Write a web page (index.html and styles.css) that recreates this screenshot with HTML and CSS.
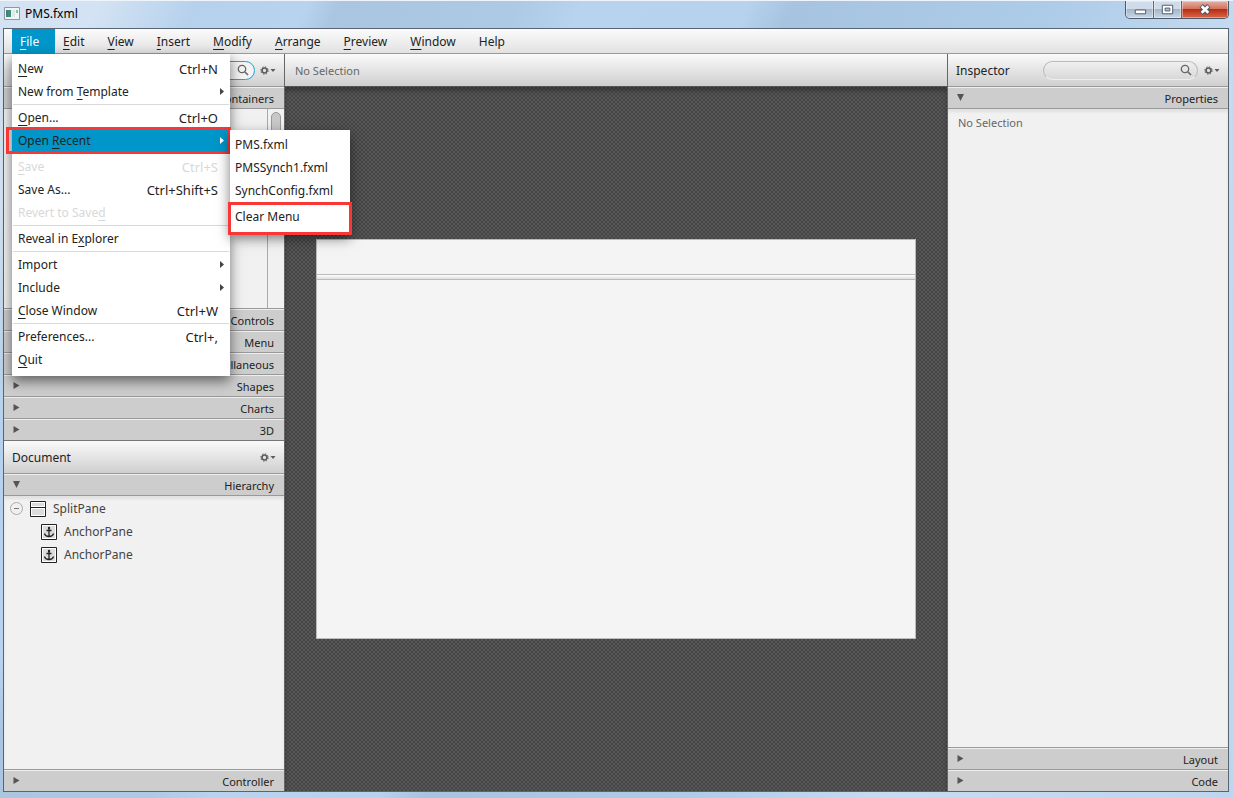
FILE: index.html
```html
<!DOCTYPE html>
<html lang="en">
<head>
<meta charset="utf-8">
<title>PMS.fxml</title>
<link rel="stylesheet" href="styles.css">
</head>
<body>
<svg class="defs" aria-hidden="true">
  <symbol id="search" viewBox="0 0 12 12"><circle cx="5" cy="5" r="3.7" fill="none" stroke="#666" stroke-width="1.3"/><path d="M7.7 7.7 11 11" stroke="#666" stroke-width="1.6"/></symbol>
  <symbol id="gear" viewBox="0 0 16 9"><circle cx="4.5" cy="4.5" r="2.5" fill="none" stroke="#5a5a5a" stroke-width="1.7"/><circle cx="4.5" cy="4.5" r="3.7" fill="none" stroke="#5a5a5a" stroke-width="1" stroke-dasharray="1.45 1.45"/><path d="M10.500 3h5L13 6z" fill="#5a5a5a"/></symbol>
  <symbol id="right" viewBox="0 0 6 7"><path d="M0 0v7l6-3.500z" fill="currentColor"/></symbol>
  <symbol id="down" viewBox="0 0 6 6"><path d="M0 0h6L3 6z" fill="currentColor"/></symbol>
  <symbol id="sub" viewBox="0 0 4 7"><path d="M0 0v7l4-3.500z" fill="currentColor"/></symbol>
  <symbol id="anchor" viewBox="0 0 16 16"><path d="M.5.5h15v15H.5z" fill="#fff" stroke="#222"/><path d="M2 2h12v12H2z" fill="#dcdcdc"/><path d="M8 4v8.500M5.500 6.500h5M3.500 9.500c.5 2 2 3 4.500 3s4-1 4.500-3" fill="none" stroke="#222" stroke-width="1.3"/><circle cx="8" cy="4" r="1.200" fill="#222"/></symbol>
</svg>
<div class="window">
  <header class="titlebar">
    <svg class="appicon" viewBox="0 0 16 13"><path d="M.5.5h15v12H.5z" fill="#f4f4f4" stroke="#8d98a3"/><path d="M2 3h5v7H2z" fill="#3f8f78"/><path d="M2 3h2v7H2z" fill="#4c7990"/><path d="M8 3h3v7H8z" fill="#e0e8e8"/><path d="M12 3h2v3h-2z" fill="#7fc4a4"/></svg>
    <h1 class="title">PMS.fxml</h1>
    <div class="controls">
      <button class="ctl" aria-label="Minimize"><svg viewBox="0 0 28 18"><path d="M9.500 9.500h11v4h-11z" fill="#fff" stroke="#4c5566"/></svg></button>
      <button class="ctl" aria-label="Maximize"><svg viewBox="0 0 28 18"><path d="M8.500 4.500h11v9h-11z" fill="#fff" stroke="#4c5566"/><path d="M11.500 7.500h5v3h-5z" fill="#b9cadb" stroke="#4c5566"/></svg></button>
      <button class="ctl close" aria-label="Close"><svg viewBox="0 0 46 18"><path d="m19 5 8 8M27 5l-8 8" stroke="#4c5566" stroke-width="5"/><path d="m19.500 5.500 7 7M26.500 5.500l-7 7" stroke="#fff" stroke-width="2.800"/></svg></button>
    </div>
  </header>
  <div class="client">
    <nav class="menubar">
      <div class="filewrap">
        <button class="mb active"><u>F</u>ile</button>
        <div class="menu filemenu">
          <button class="mi"><span><u>N</u>ew</span><kbd>Ctrl+N</kbd></button>
          <button class="mi"><span>New from <u>T</u>emplate</span><svg class="sub"><use href="#sub"/></svg></button>
          <hr>
          <button class="mi"><span><u>O</u>pen...</span><kbd>Ctrl+O</kbd></button>
          <div class="subwrap">
            <button class="mi selected"><span>Open <u>R</u>ecent</span><svg class="sub"><use href="#sub"/></svg></button>
            <div class="mark markrecent"></div>
            <div class="menu recent">
              <button class="mi">PMS.fxml</button>
              <button class="mi">PMSSynch1.fxml</button>
              <button class="mi">SynchConfig.fxml</button>
              <hr>
              <button class="mi">Clear Menu</button>
              <div class="mark markclear"></div>
            </div>
          </div>
          <hr>
          <button class="mi" disabled><span><u>S</u>ave</span><kbd>Ctrl+S</kbd></button>
          <button class="mi"><span>Save As...</span><kbd>Ctrl+Shift+S</kbd></button>
          <button class="mi" disabled><span>Revert to Save<u>d</u></span></button>
          <hr>
          <button class="mi"><span>Reveal in E<u>x</u>plorer</span></button>
          <hr>
          <button class="mi"><span>Import</span><svg class="sub"><use href="#sub"/></svg></button>
          <button class="mi"><span>Include</span><svg class="sub"><use href="#sub"/></svg></button>
          <button class="mi"><span><u>C</u>lose Window</span><kbd>Ctrl+W</kbd></button>
          <hr>
          <button class="mi"><span>Preferences...</span><kbd>Ctrl+,</kbd></button>
          <button class="mi"><span><u>Q</u>uit</span></button>
        </div>
      </div>
      <button class="mb"><u>E</u>dit</button>
      <button class="mb"><u>V</u>iew</button>
      <button class="mb"><u>I</u>nsert</button>
      <button class="mb"><u>M</u>odify</button>
      <button class="mb"><u>A</u>rrange</button>
      <button class="mb"><u>P</u>review</button>
      <button class="mb"><u>W</u>indow</button>
      <button class="mb">Help</button>
    </nav>
    <main class="work">
      <aside class="side left">
        <section class="library">
          <div class="bar"><label class="search focus"><input type="text" aria-label="Search library"><svg><use href="#search"/></svg></label><button class="gear" aria-label="Library options"><svg><use href="#gear"/></svg></button></div>
          <button class="sec"><svg><use href="#down"/></svg>Containers</button>
          <div class="list"><div class="track"><div class="thumb"></div></div></div>
          <button class="sec"><svg><use href="#right"/></svg>Controls</button>
          <button class="sec"><svg><use href="#right"/></svg>Menu</button>
          <button class="sec"><svg><use href="#right"/></svg>Miscellaneous</button>
          <button class="sec"><svg><use href="#right"/></svg>Shapes</button>
          <button class="sec"><svg><use href="#right"/></svg>Charts</button>
          <button class="sec"><svg><use href="#right"/></svg>3D</button>
        </section>
        <section class="document">
          <div class="bar"><h2>Document</h2><button class="gear" aria-label="Document options"><svg><use href="#gear"/></svg></button></div>
          <button class="sec"><svg><use href="#down"/></svg>Hierarchy</button>
          <div class="tree">
            <div class="node"><svg class="toggle" viewBox="0 0 13 13"><circle cx="6.500" cy="6.500" r="6" fill="#f0f0f0" stroke="#aaa"/><path d="M4 6.500h5" stroke="#777"/></svg><svg class="nicon" viewBox="0 0 16 16"><path d="M.5.5h15v15H.5z" fill="#fff" stroke="#222"/><path d="M2 2h12v3H2zM2 8h12v6H2z" fill="#dcdcdc"/><path d="M0 6.500h16" stroke="#222"/></svg>SplitPane</div>
            <div class="node child"><svg class="nicon"><use href="#anchor"/></svg>AnchorPane</div>
            <div class="node child"><svg class="nicon"><use href="#anchor"/></svg>AnchorPane</div>
          </div>
          <button class="sec"><svg><use href="#right"/></svg>Controller</button>
        </section>
      </aside>
      <section class="center">
        <div class="bar status">No Selection</div>
        <div class="canvas"><div class="stage"><div class="pane top"></div><div class="divider"></div><div class="pane"></div></div></div>
      </section>
      <aside class="side right">
        <div class="bar"><h2>Inspector</h2><label class="search"><input type="text" aria-label="Search properties"><svg><use href="#search"/></svg></label><button class="gear" aria-label="Inspector options"><svg><use href="#gear"/></svg></button></div>
        <button class="sec"><svg><use href="#down"/></svg>Properties</button>
        <div class="props">No Selection</div>
        <button class="sec"><svg><use href="#right"/></svg>Layout</button>
        <button class="sec"><svg><use href="#right"/></svg>Code</button>
      </aside>
    </main>
  </div>
</div>
</body>
</html>
```
FILE: styles.css
```css
* { box-sizing: border-box; }
body { margin: 0; font: 12px/16px "Noto Sans", sans-serif; color: #222; }
button { font: inherit; color: inherit; border: 0; padding: 0; background: none; text-align: left; }
h1, h2 { margin: 0; font-size: 12px; font-weight: 400; }
.defs { position: absolute; width: 0; height: 0; }

.window {
  display: flex; flex-direction: column; height: 100vh; padding: 0 4px 6px 3px;
  border-top: 1px solid #eef4fa;
  background: linear-gradient(115deg, #d3e3f3 0, #d3e3f3 90px, #b6d1ec 180px, #b8d3ee 280px, #a9c5e0 310px, #adcae5 470px, #b7d3ee 530px, #b6d2ed 680px, #a6c4e0 720px, #adcce8 960px, #c6dbf0 1140px, #bdd6ef);
}
.titlebar { display: flex; align-items: flex-start; height: 27px; flex: none; }
.appicon { width: 16px; height: 13px; margin: 6px 5px 0 1px; }
.title { flex: 1; margin-top: 4px; color: #000; font-size: 12px; line-height: 17px; }
.controls {
  display: flex; height: 18px; overflow: hidden; border: 1px solid #4b596a; border-top: 0;
  border-radius: 0 0 5px 5px; background: linear-gradient(#cfdbe8 0 45%, #a5b6c9 50%, #c8d8e9);
}
.ctl { width: 28px; height: 17px; border-right: 1px solid #5b6878; box-shadow: inset 0 0 0 1px #ffffff66; }
.ctl svg { display: block; width: 100%; height: 17px; }
.close { width: 46px; border: 0; background: linear-gradient(#e0a496 0 10%, #d3745e 45%, #b62d15 50%, #d45c3c 90%); }

.client { display: flex; flex-direction: column; flex: 1; min-height: 0; border: 1px solid #596473; background: #f1f1f1; }
.menubar { display: flex; height: 25px; flex: none; padding-left: 8px; border-bottom: 1px solid #999; background: linear-gradient(#fbfbfb, #e2e2e2); }
.mb { height: 25px; padding: 0 15px 0 8px; white-space: nowrap; }
.mb u, .mi u { text-decoration: underline; text-underline-offset: 3px; text-decoration-thickness: 1px; text-decoration-skip-ink: none; }
.filewrap { position: relative; }
.active { width: 43px; background: #0096c9; color: #fff; }

.menu { position: absolute; z-index: 5; background: #fff; box-shadow: 0 5px 12px #0008; }
.filemenu { top: 25px; left: 0; width: 218px; padding: 3px 0 5px; }
.mi { display: flex; align-items: center; justify-content: space-between; width: 100%; height: 23px; padding: 0 12px 0 6px; white-space: nowrap; }
.mi kbd { font: inherit; font-size: 13px; }
.mi:disabled { color: #d8d8d8; }
.menu hr { height: 1px; margin: 1px; border: 0; background: #d9d9d9; }
.sub { width: 4px; height: 7px; margin-right: -6px; color: #444; }
.selected { background: #0096c9; }
.selected .sub { color: #fff; }
.subwrap { position: relative; }
.recent { top: 1px; left: 218px; width: 120px; padding: 3px 0 5px; }
.recent .mi { padding-left: 5px; }
.mark { position: absolute; border: 3px solid #fa3737; pointer-events: none; }
.markrecent { inset: -2px -1px -2px -6px; }
.markclear { z-index: 6; left: -2px; right: -2px; bottom: -2px; height: 33px; }

.work { display: flex; flex: 1; min-height: 0; }
.side { display: flex; flex-direction: column; width: 280px; flex: none; }
.bar { display: flex; align-items: center; height: 33px; flex: none; padding: 0 8px; border-bottom: 1px solid #999; background: linear-gradient(#fafafa, #cfcfcf); }
.bar h2 { flex: 1; padding-top: 2px; }
.search { display: flex; align-items: center; width: 155px; height: 19px; margin-right: 6px; padding-right: 5px; border: 1px solid #bbb; border-bottom-color: #eee; border-radius: 10px; }
.search input { flex: 1; min-width: 0; border: 0; background: none; outline: 0; }
.search svg { width: 12px; height: 12px; }
.search.focus { flex: 1; margin-right: 5px; border: 1px solid #18a6d8; background: #f4f4f4; }
.gear svg { display: block; width: 16px; height: 9px; }
.sec { display: flex; align-items: center; justify-content: space-between; height: 22px; flex: none; padding: 2px 10px 0 9px; border-top: 1px solid #eee; border-bottom: 1px solid #999; background: #cdcdcd; font-size: 11px; }
.sec svg { width: 7px; height: 7px; margin-bottom: 4px; color: #555; }
.library { display: flex; flex-direction: column; height: 387px; flex: none; border-bottom: 1px solid #777; }
.library .sec:last-child, .document .sec:last-child, .right .sec:last-child { height: 21px; border-bottom: 0; }
.list { display: flex; justify-content: flex-end; flex: 1; min-height: 0; border-bottom: 1px solid #999; }
.track { width: 17px; padding: 3px 4px 3px 3px; border-left: 1px solid #aaa; }
.thumb { width: 10px; height: 62px; border: 1px solid #999; border-radius: 5px; background: #c8c8c8; }
.document { display: flex; flex-direction: column; flex: 1; min-height: 0; }
.tree { flex: 1; padding: 1px 6px; border-bottom: 1px solid #999; box-shadow: inset 0 3px 3px #0001; color: #444; }
.node { display: flex; align-items: center; height: 23px; font-size: 12px; }
.toggle { width: 13px; height: 13px; margin-right: 7px; }
.nicon { width: 16px; height: 16px; margin-right: 7px; }
.child { padding-left: 31px; }

.center { display: flex; flex-direction: column; flex: 1; min-width: 0; border: solid #666; border-width: 0 1px; }
.status { padding: 2px 10px 0; color: #666; font-size: 11px; border-color: #555; }
.canvas { display: flex; align-items: center; justify-content: center; flex: 1; box-shadow: inset 0 4px 4px #0004; background: repeating-conic-gradient(#454545 0 25%, #575757 0 50%) 0 0 / 4px 4px; }
.stage { display: flex; flex-direction: column; width: 600px; height: 400px; border: 1px solid #bbb; background: #f4f4f4; }
.pane { flex: 1; }
.top { flex: none; height: 34px; }
.divider { height: 6px; border: solid #bbb; border-width: 1px 0; background: linear-gradient(#fff, #ddd); }
.props { flex: 1; padding: 6px 10px; border-bottom: 1px solid #999; box-shadow: inset 0 3px 3px #0001; color: #666; font-size: 11px; }
```
